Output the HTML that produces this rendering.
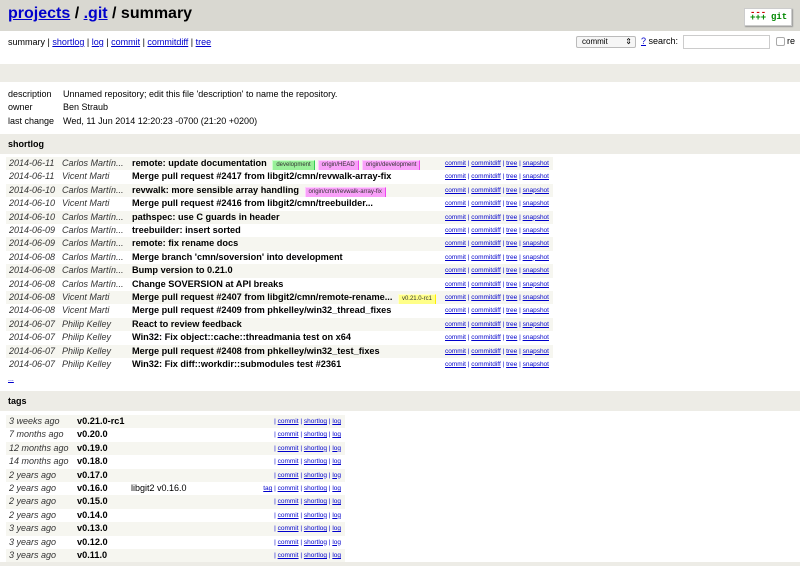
<!DOCTYPE html>
<html><head><meta charset="utf-8"><style>
*{margin:0;padding:0;box-sizing:border-box}
body{width:800px;height:566px;overflow:hidden;background:#fff;font-family:"Liberation Sans",sans-serif;font-size:9px;color:#000;position:relative}
a{color:#0000cc;text-decoration:underline}
.hdr{position:absolute;left:0;top:0;width:800px;height:31px;background:#d9d8d1;}
.hdr .t{position:absolute;left:8px;top:5px;font-size:16px;font-weight:bold}
.logo{position:absolute;left:744px;top:8px;width:48px;height:18px;background:#fff;border:1px solid #ccc;box-shadow:1px 1px 1px #999;font-family:"Liberation Mono",monospace;font-weight:bold;color:#080;font-size:9px;padding:3px 0 0 5px}
.nav{position:absolute;left:8px;top:37px;font-size:9px}
.bar{position:absolute;left:0;width:800px;background:#edece6}
.ph{position:absolute;left:8px;font-weight:bold;font-size:9px}
.row{position:absolute;left:6px;height:13.4px;line-height:13.4px;white-space:nowrap}
.row>span{position:absolute;top:0}
.i{font-style:italic;color:#333}
.b{font-weight:bold;font-size:9.2px}
.l{font-size:6.5px;color:#0000cc}
.l a{color:#0000cc}
.tag{font-size:6px;padding:0 3px;border:1px solid;line-height:9px;display:inline-block;vertical-align:0;margin-left:3px;font-weight:normal;color:#333}
.g{background:#99f099;border-color:#ccffcc #33cc55 #33cc55 #ccffcc}
.p{background:#f9a0f9;border-color:#ffccff #ee44ee #ee44ee #ffccff}
.y{background:#ffff88;border-color:#ffffcc #ffee00 #ffee00 #ffffcc}
</style></head><body>
<div class="hdr"><div class="t"><a href="#">projects</a> / <a href="#">.git</a> / summary</div>
<div class="logo"><span style="color:#c00;position:absolute;left:5px;top:-1px">---</span><span style="position:absolute;left:5px;top:4px">+++</span><span style="position:absolute;left:26px;top:3px">git</span></div></div>
<div class="nav">summary | <a href="#">shortlog</a> | <a href="#">log</a> | <a href="#">commit</a> | <a href="#">commitdiff</a> | <a href="#">tree</a></div>
<div style="position:absolute;left:576px;top:36px;width:60px;height:12px;border:1px solid #bbb;border-radius:2px;font-size:8px;padding-left:5px;line-height:10px;background:#f6f6f6">commit <span style="float:right;margin-right:3px">⇕</span></div>
<div style="position:absolute;left:641px;top:36px;font-size:9px"><a href="#">?</a> search:</div>
<div style="position:absolute;left:683px;top:35px;width:87px;height:14px;border:1px solid #ccc"></div>
<div style="position:absolute;left:776px;top:37px;width:9px;height:9px;border:1px solid #aaa;border-radius:2px"></div>
<div style="position:absolute;left:787px;top:36px;font-size:9px">re</div>
<div class="bar" style="top:64px;height:18px"></div>
<div class="row" style="top:88px;left:8px"><span>description</span><span style="left:55px">Unnamed repository; edit this file 'description' to name the repository.</span></div>
<div class="row" style="top:101px;left:8px"><span>owner</span><span style="left:55px">Ben Straub</span></div>
<div class="row" style="top:115px;left:8px"><span>last change</span><span style="left:55px">Wed, 11 Jun 2014 12:20:23 -0700 (21:20 +0200)</span></div>
<div class="bar" style="top:134px;height:20px"></div><div class="ph" style="top:139px">shortlog</div>
<div id="sl"></div>
<div style="position:absolute;left:8px;top:376px;font-size:7px"><a href="#">...</a></div>
<div class="bar" style="top:391px;height:20px"></div><div class="ph" style="top:396px">tags</div>
<div id="tg"></div>
<div class="bar" style="top:562px;height:4px"></div>
<script>
var L='<a href="#">commit</a> | <a href="#">commitdiff</a> | <a href="#">tree</a> | <a href="#">snapshot</a>';
var s=[["2014-06-11","Carlos Martín...","remote: update documentation",' <span class="tag g">development</span><span class="tag p">origin/HEAD</span><span class="tag p">origin/development</span>'],
["2014-06-11","Vicent Marti","Merge pull request #2417 from libgit2/cmn/revwalk-array-fix",""],
["2014-06-10","Carlos Martín...","revwalk: more sensible array handling",' <span class="tag p">origin/cmn/revwalk-array-fix</span>'],
["2014-06-10","Vicent Marti","Merge pull request #2416 from libgit2/cmn/treebuilder...",""],
["2014-06-10","Carlos Martín...","pathspec: use C guards in header",""],
["2014-06-09","Carlos Martín...","treebuilder: insert sorted",""],
["2014-06-09","Carlos Martín...","remote: fix rename docs",""],
["2014-06-08","Carlos Martín...","Merge branch 'cmn/soversion' into development",""],
["2014-06-08","Carlos Martín...","Bump version to 0.21.0",""],
["2014-06-08","Carlos Martín...","Change SOVERSION at API breaks",""],
["2014-06-08","Vicent Marti","Merge pull request #2407 from libgit2/cmn/remote-rename...",' <span class="tag y">v0.21.0-rc1</span>'],
["2014-06-08","Vicent Marti","Merge pull request #2409 from phkelley/win32_thread_fixes",""],
["2014-06-07","Philip Kelley","React to review feedback",""],
["2014-06-07","Philip Kelley","Win32: Fix object::cache::threadmania test on x64",""],
["2014-06-07","Philip Kelley","Merge pull request #2408 from phkelley/win32_test_fixes",""],
["2014-06-07","Philip Kelley","Win32: Fix diff::workdir::submodules test #2361",""]];
var h='';s.forEach(function(r,i){var t=157+i*13.4;
h+='<div class="row" style="top:'+t+'px;width:547px;background:'+(i%2==0?'#f6f6f0':'#fff')+'"><span class="i" style="left:3px">'+r[0]+'</span><span class="i" style="left:56px">'+r[1]+'</span><span class="b" style="left:126px">'+r[2]+r[3]+'</span><span class="l" style="left:439px">'+L+'</span></div>';});
document.getElementById('sl').innerHTML=h;
var T=[["3 weeks ago","v0.21.0-rc1",""],["7 months ago","v0.20.0",""],["12 months ago","v0.19.0",""],["14 months ago","v0.18.0",""],["2 years ago","v0.17.0",""],["2 years ago","v0.16.0","libgit2 v0.16.0"],["2 years ago","v0.15.0",""],["2 years ago","v0.14.0",""],["3 years ago","v0.13.0",""],["3 years ago","v0.12.0",""],["3 years ago","v0.11.0",""]];
h='';T.forEach(function(r,i){var t=415+i*13.4;
h+='<div class="row" style="top:'+t+'px;width:339px;background:'+(i%2==0?'#f6f6f0':'#fff')+'"><span class="i" style="left:3px">'+r[0]+'</span><span class="b" style="left:71px">'+r[1]+'</span><span style="left:125px">'+r[2]+'</span><span class="l" style="right:4px">'+(r[2]?'<a href="#">tag</a> ':'')+'| <a href="#">commit</a> | <a href="#">shortlog</a> | <a href="#">log</a></span></div>';});
document.getElementById('tg').innerHTML=h;
</script>
</body></html>
